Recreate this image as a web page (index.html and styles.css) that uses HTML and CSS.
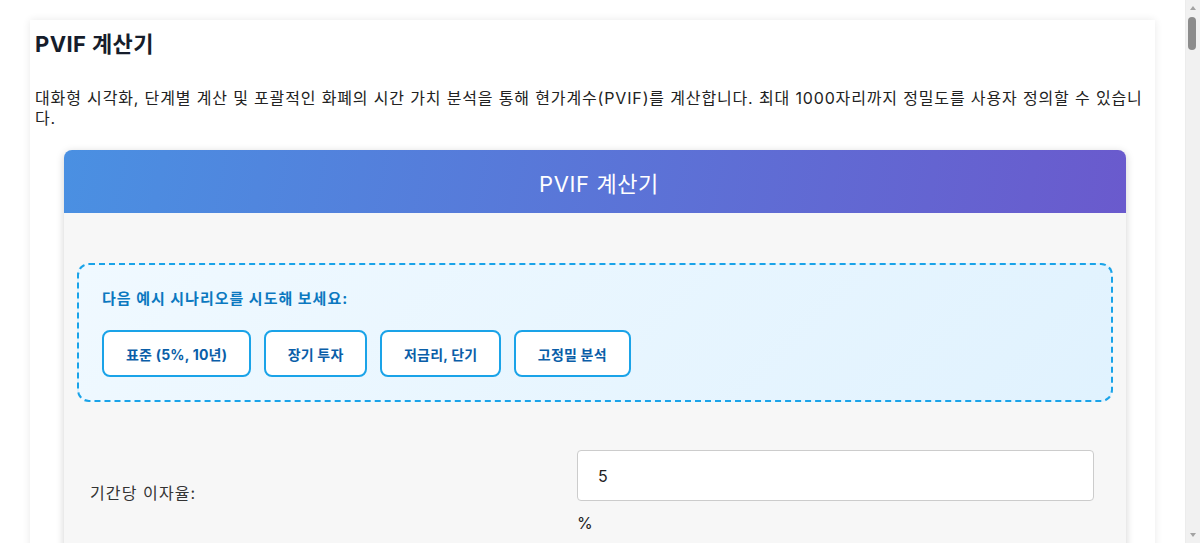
FILE: index.html
```html
<!DOCTYPE html>
<html lang="ko">
<head>
<meta charset="utf-8">
<title>PVIF 계산기</title>
<link rel="stylesheet" href="styles.css">
</head>
<body>
<div class="page">
  <h2 class="page-title">PVIF 계산기</h2>
  <p class="page-desc">대화형 시각화, 단계별 계산 및 포괄적인 화폐의 시간 가치 분석을 통해 현가계수(PVIF)를 계산합니다. 최대 1000자리까지 정밀도를 사용자 정의할 수 있습니다.</p>
  <div class="calc">
    <div class="calc-header">PVIF 계산기</div>
    <div class="calc-body">
      <div class="examples">
        <div class="examples-title">다음 예시 시나리오를 시도해 보세요:</div>
        <div class="examples-buttons">
          <button class="ex-btn">표준 (5%, 10년)</button>
          <button class="ex-btn">장기 투자</button>
          <button class="ex-btn">저금리, 단기</button>
          <button class="ex-btn">고정밀 분석</button>
        </div>
      </div>
      <div class="form-row">
        <label class="form-label" for="rate">기간당 이자율:</label>
        <div class="input-group">
          <input id="rate" class="form-input" type="text" value="5">
          <span class="unit">%</span>
        </div>
      </div>
      <div class="form-row">
        <label class="form-label" for="periods">기간 수:</label>
        <div class="input-group">
          <input id="periods" class="form-input" type="text" value="10">
          <span class="unit">기간</span>
        </div>
      </div>
    </div>
  </div>
</div>
<div class="scrollbar" aria-hidden="true">
  <span class="sb-arrow sb-up"></span>
  <span class="sb-thumb"></span>
  <span class="sb-arrow sb-down"></span>
</div>
</body>
</html>
```
FILE: styles.css
```css
html, body {
  margin: 0;
  padding: 0;
  background: #ffffff;
}
body {
  font-family: Inter, "Noto Sans CJK KR", sans-serif;
  color: #222;
  padding: 20px 45px 40px 30px;
}
.page {
  background: #ffffff;
  padding: 5px 5px 20px 5px;
  box-shadow: 0 0 8px rgba(0, 0, 0, 0.09);
}
.page-title {
  margin: 6px 0 0 0;
  font-size: 22px;
  line-height: 26px;
  font-weight: 700;
  letter-spacing: 0.4px;
  color: #161d2b;
}
.page-desc {
  margin: 31px 0 0 0;
  font-size: 16px;
  line-height: 20px;
  letter-spacing: 0.85px;
  color: #222;
}
.calc {
  margin: 22px 24px 0 29px;
  border-radius: 8px;
  box-shadow: 0 2px 8px rgba(0, 0, 0, 0.18);
  overflow: hidden;
  background: #f7f7f7;
}
.calc-header {
  height: 63px;
  display: flex;
  align-items: center;
  justify-content: center;
  padding-left: 8px;
  color: #ffffff;
  font-size: 22px;
  letter-spacing: 0.6px;
  background: linear-gradient(100deg, #4a90e2 0%, #6a5acd 100%);
}
.calc-body {
  padding: 50px 13px 20px 13px;
}
.examples {
  border: 2px dashed #1aa3e8;
  border-radius: 12px;
  background: linear-gradient(135deg, #f0f9ff 0%, #e0f2fe 100%);
  padding: 23px 23px 23px 23px;
}
.examples-title {
  font-size: 15px;
  line-height: 22px;
  font-weight: 700;
  letter-spacing: 1px;
  color: #0b78c0;
  margin-bottom: 20px;
}
.examples-buttons {
  display: flex;
  gap: 12.5px;
}
.ex-btn {
  font-family: Inter, "Noto Sans CJK KR", sans-serif;
  font-size: 14px;
  font-weight: 700;
  letter-spacing: 0.2px;
  color: #0a5ea8;
  background: #ffffff;
  border: 2px solid #1aa3e8;
  border-radius: 8px;
  height: 47px;
  padding: 0 22px;
}
.form-row {
  display: grid;
  grid-template-columns: 1fr 517px;
  align-items: center;
  padding: 0 19px 0 13px;
  margin-top: 48px;
}
.form-label {
  font-size: 16px;
  letter-spacing: 1.1px;
  color: #333;
}
.input-group {
  display: flex;
  flex-direction: column;
  align-items: flex-start;
  gap: 12px;
}
.form-input {
  box-sizing: border-box;
  width: 100%;
  height: 51px;
  border: 1px solid #cccccc;
  border-radius: 4px;
  padding: 0 20px;
  font-family: Inter, "Noto Sans CJK KR", sans-serif;
  font-size: 16px;
  color: #222;
  background: #fff;
}
.unit {
  font-size: 16px;
  line-height: 20px;
  color: #222;
}
.scrollbar {
  position: fixed;
  top: 0;
  right: 0;
  bottom: 0;
  width: 15px;
  background: #f1f1f1;
  border-left: 1px solid #ececec;
  box-sizing: border-box;
}
.sb-arrow {
  position: absolute;
  left: 4px;
  width: 0;
  height: 0;
  border-left: 3.5px solid transparent;
  border-right: 3.5px solid transparent;
}
.sb-up {
  top: 6px;
  border-bottom: 4px solid #a3a3a3;
}
.sb-down {
  bottom: 6px;
  border-top: 4px solid #a3a3a3;
}
.sb-thumb {
  position: absolute;
  top: 17px;
  left: 2px;
  width: 8px;
  height: 33px;
  border-radius: 4px;
  background: #8c8c8c;
}
```
